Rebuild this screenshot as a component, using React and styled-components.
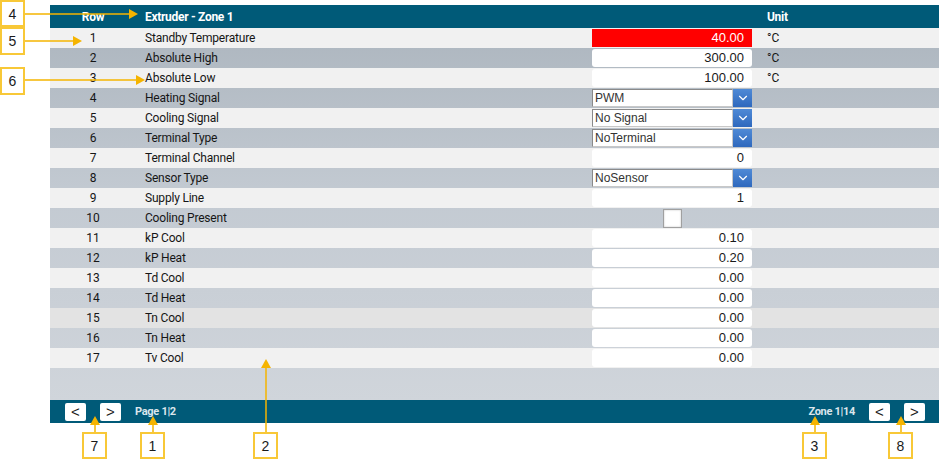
import styled, { createGlobalStyle } from "styled-components";
import { ChevronDown } from "lucide-react";

const GlobalStyle = createGlobalStyle`
  body {
    margin: 0;
    background: #ffffff;
    font-family: Roboto, "Liberation Sans", sans-serif;
  }
`;

const rows = [
  { name: "Standby Temperature", kind: "alarm", value: "40.00", unit: "°C" },
  { name: "Absolute High", kind: "input", value: "300.00", unit: "°C" },
  { name: "Absolute Low", kind: "input", value: "100.00", unit: "°C" },
  { name: "Heating Signal", kind: "select", value: "PWM" },
  { name: "Cooling Signal", kind: "select", value: "No Signal" },
  { name: "Terminal Type", kind: "select", value: "NoTerminal" },
  { name: "Terminal Channel", kind: "input", value: "0" },
  { name: "Sensor Type", kind: "select", value: "NoSensor" },
  { name: "Supply Line", kind: "input", value: "1" },
  { name: "Cooling Present", kind: "check" },
  { name: "kP Cool", kind: "input", value: "0.10" },
  { name: "kP Heat", kind: "input", value: "0.20" },
  { name: "Td Cool", kind: "input", value: "0.00" },
  { name: "Td Heat", kind: "input", value: "0.00" },
  { name: "Tn Cool", kind: "input", value: "0.00" },
  { name: "Tn Heat", kind: "input", value: "0.00" },
  { name: "Tv Cool", kind: "input", value: "0.00" },
];

const Page = styled.div`
  position: relative;
  width: 940px;
  height: 463px;
  padding: 5px 0 0 50px;
  box-sizing: border-box;
`;

const Panel = styled.div`
  width: 889px;
  display: flex;
  flex-direction: column;
`;

const Grid = styled.div`
  display: grid;
  grid-template-columns: 86px 456px 160px 1fr;
  align-items: center;
  height: ${(p) => p.$h || 20}px;
  background: ${(p) => p.$bg || "transparent"};
`;

const HeadCell = styled.div`
  color: #ffffff;
  font-weight: 700;
  font-size: 12px;
  letter-spacing: -0.3px;
  text-align: ${(p) => (p.$center ? "center" : "left")};
  padding-left: ${(p) => p.$pad || 0}px;
`;

const Body = styled.div`
  background: linear-gradient(180deg, #adb6bf 0%, #c3cad2 45%, #d0d5db 100%);
  padding-bottom: 32px;
`;

const NumCell = styled.div`
  text-align: center;
  font-size: 12px;
  color: #161616;
`;

const NameCell = styled.div`
  font-size: 12px;
  color: #161616;
  padding-left: 9px;
  letter-spacing: -0.2px;
`;

const UnitCell = styled.div`
  font-size: 12px;
  color: #161616;
  padding-left: 15px;
`;

const ValueBox = styled.div`
  height: 18px;
  box-sizing: border-box;
  background: ${(p) => (p.$alarm ? "#ff0000" : "#ffffff")};
  color: ${(p) => (p.$alarm ? "#ffffff" : "#1a1a1a")};
  border-radius: ${(p) => (p.$alarm ? 0 : 3)}px;
  font-family: "Liberation Sans", Arial, sans-serif;
  font-size: 13px;
  line-height: 18px;
  text-align: right;
  padding-right: 8px;
`;

const Select = styled.div`
  display: flex;
  height: 18px;
  width: 160px;
`;

const SelectText = styled.div`
  flex: 1;
  background: #ffffff;
  border: 1px solid #c8c8c8;
  border-top-color: #8a8a8a;
  border-left-color: #8a8a8a;
  box-sizing: border-box;
  font-family: "Liberation Sans", Arial, sans-serif;
  font-size: 12px;
  line-height: 16px;
  color: #333333;
  padding-left: 2px;
`;

const SelectButton = styled.div`
  width: 19px;
  background: linear-gradient(180deg, #4f8ad6 0%, #2e68bd 100%);
  display: flex;
  align-items: center;
  justify-content: center;
  color: #ffffff;
`;

const CheckWrap = styled.div`
  display: flex;
  justify-content: center;
`;

const Check = styled.div`
  width: 19px;
  height: 19px;
  box-sizing: border-box;
  background: #ffffff;
  border: 1px solid #a0a0a0;
  box-shadow: inset 0 0 2px rgba(0, 0, 0, 0.25);
`;

const Footer = styled.div`
  height: 23px;
  background: #005a78;
  display: flex;
  align-items: center;
  padding: 0 14px 0 15px;
  gap: 14px;
`;

const NavButton = styled.div`
  width: 21px;
  height: 18px;
  background: #ffffff;
  border-radius: 2px;
  display: flex;
  align-items: center;
  justify-content: center;
  font-family: "Liberation Sans", Arial, sans-serif;
  font-size: 15px;
  color: #1a1a1a;
`;

const FooterText = styled.div`
  color: #dbe6ec;
  font-size: 11px;
  font-weight: 700;
  letter-spacing: -0.3px;
`;

const Spacer = styled.div`
  flex: 1;
`;

const Callout = styled.div`
  position: absolute;
  left: ${(p) => p.$x}px;
  top: ${(p) => p.$y}px;
  width: ${(p) => p.$w || 25}px;
  height: ${(p) => p.$h || 27}px;
  box-sizing: border-box;
  border: 2px solid #f8c837;
  background: #ffffff;
  display: flex;
  align-items: center;
  justify-content: center;
  font-family: "Liberation Sans", Arial, sans-serif;
  font-size: 14px;
  color: #1a1a1a;
`;

const Overlay = styled.svg`
  position: absolute;
  left: 0;
  top: 0;
  pointer-events: none;
`;

function Value({ row }) {
  if (row.kind === "alarm") return <ValueBox $alarm>{row.value}</ValueBox>;
  if (row.kind === "input") return <ValueBox>{row.value}</ValueBox>;
  if (row.kind === "select")
    return (
      <Select>
        <SelectText>{row.value}</SelectText>
        <SelectButton>
          <ChevronDown size={14} strokeWidth={2} />
        </SelectButton>
      </Select>
    );
  return (
    <CheckWrap>
      <Check />
    </CheckWrap>
  );
}

const arrows = [
  // [x1, y1, x2, y2]
  [25, 14, 138, 14],
  [25, 41, 82, 41],
  [25, 80, 145, 80],
  [95, 432, 95, 416],
  [153, 432, 153, 416],
  [266, 432, 266, 359],
  [815, 432, 815, 416],
  [901, 432, 901, 416],
];

function Arrow({ a }) {
  const [x1, y1, x2, y2] = a;
  const horiz = y1 === y2;
  const head = horiz
    ? `${x2},${y2} ${x2 - 9},${y2 - 5} ${x2 - 9},${y2 + 5}`
    : `${x2},${y2} ${x2 - 5},${y2 + 9} ${x2 + 5},${y2 + 9}`;
  return (
    <g>
      <line
        x1={x1}
        y1={y1}
        x2={horiz ? x2 - 8 : x2}
        y2={horiz ? y2 : y2 + 8}
        stroke="#f5b400"
        strokeWidth="1.5"
      />
      <polygon points={head} fill="#f5b400" />
    </g>
  );
}

export default function App() {
  return (
    <>
      <GlobalStyle />
      <Page>
        <Panel>
          <Grid $h={23} $bg="#005a78">
            <HeadCell $center>Row</HeadCell>
            <HeadCell $pad={9}>Extruder - Zone 1</HeadCell>
            <div />
            <HeadCell $pad={15}>Unit</HeadCell>
          </Grid>
          <Body>
            {rows.map((r, i) => (
              <Grid
                key={r.name}
                $bg={i % 2 === 0 ? (i === 14 ? "#e3e3e3" : "#f1f1f1") : "transparent"}
              >
                <NumCell>{i + 1}</NumCell>
                <NameCell>{r.name}</NameCell>
                <Value row={r} />
                <UnitCell>{r.unit || ""}</UnitCell>
              </Grid>
            ))}
          </Body>
          <Footer>
            <NavButton>&lt;</NavButton>
            <NavButton>&gt;</NavButton>
            <FooterText>Page 1|2</FooterText>
            <Spacer />
            <FooterText>Zone 1|14</FooterText>
            <NavButton>&lt;</NavButton>
            <NavButton>&gt;</NavButton>
          </Footer>
        </Panel>
        <Overlay width="940" height="463">
          {arrows.map((a, i) => (
            <Arrow key={i} a={a} />
          ))}
        </Overlay>
        <Callout $x={0} $y={0}>4</Callout>
        <Callout $x={0} $y={27} $h={28}>5</Callout>
        <Callout $x={0} $y={67} $h={28}>6</Callout>
        <Callout $x={82} $y={432}>7</Callout>
        <Callout $x={140} $y={432}>1</Callout>
        <Callout $x={253} $y={432}>2</Callout>
        <Callout $x={802} $y={432}>3</Callout>
        <Callout $x={888} $y={432}>8</Callout>
      </Page>
    </>
  );
}
